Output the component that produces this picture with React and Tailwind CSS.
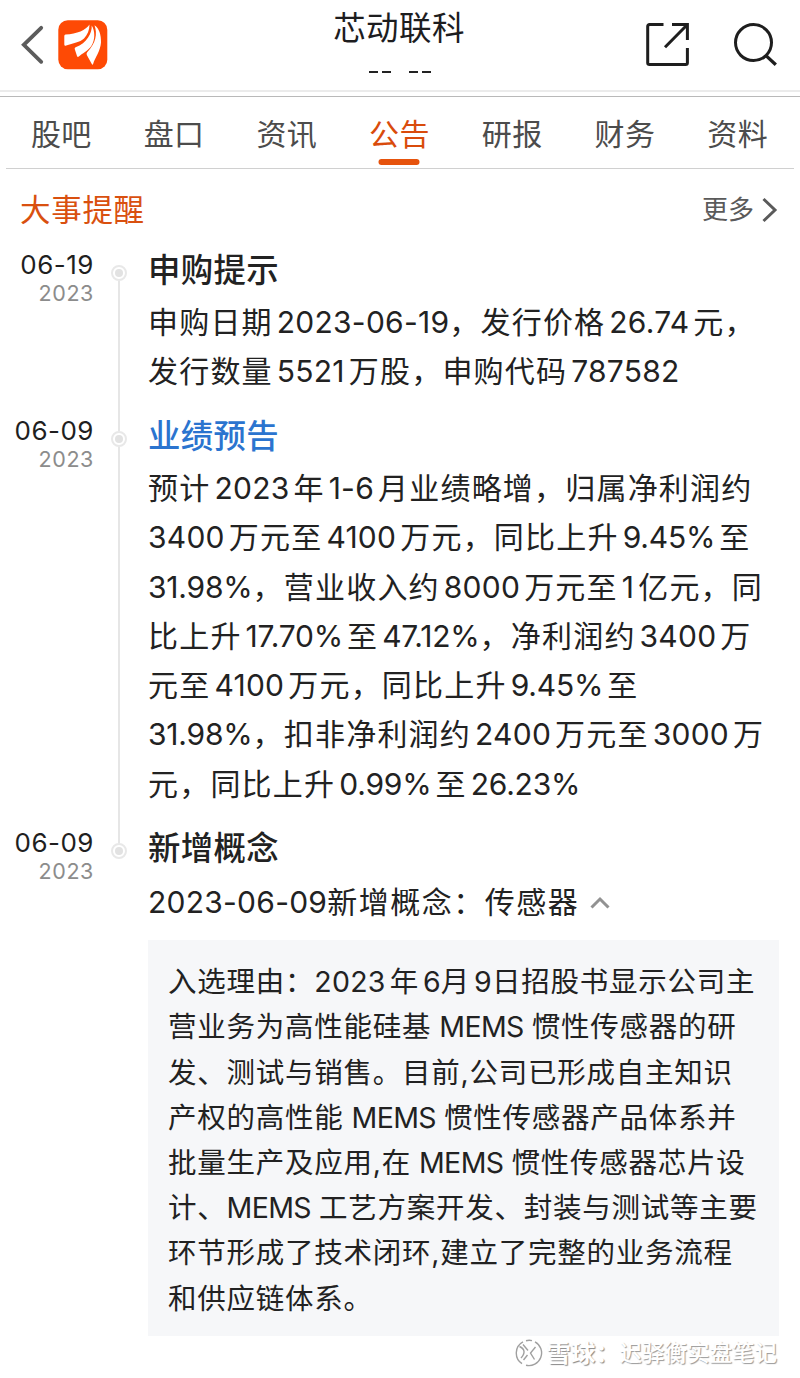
import clsx from 'clsx';

const tabs = ['股吧', '盘口', '资讯', '公告', '研报', '财务', '资料'];

const events = [
  {
    date: '06-19',
    year: '2023',
    title: '申购提示',
    height: 'h-[166px]',
    lines: ['申购日期 2023-06-19，发行价格 26.74 元，', '发行数量 5521 万股，申购代码 787582'],
  },
  {
    date: '06-09',
    year: '2023',
    title: '业绩预告',
    link: true,
    height: 'h-[412px]',
    lines: [
      '预计 2023 年 1-6 月业绩略增，归属净利润约',
      '3400 万元至 4100 万元，同比上升 9.45% 至',
      '31.98%，营业收入约 8000 万元至 1 亿元，同',
      '比上升 17.70% 至 47.12%，净利润约 3400 万',
      '元至 4100 万元，同比上升 9.45% 至',
      '31.98%，扣非净利润约 2400 万元至 3000 万',
      '元，同比上升 0.99% 至 26.23%',
    ],
  },
  {
    date: '06-09',
    year: '2023',
    title: '新增概念',
    height: 'h-[511px]',
    lines: ['2023-06-09新增概念：传感器'],
    reason: [
      '入选理由：2023 年 6月 9日招股书显示公司主',
      '营业务为高性能硅基  MEMS  惯性传感器的研',
      '发、测试与销售。目前,公司已形成自主知识',
      '产权的高性能  MEMS  惯性传感器产品体系并',
      '批量生产及应用,在  MEMS  惯性传感器芯片设',
      '计、MEMS  工艺方案开发、封装与测试等主要',
      '环节形成了技术闭环,建立了完整的业务流程',
      '和供应链体系。',
    ],
  },
];

// A single space is the thin gap next to a number, a double one is a real word space
const Line = ({ text }) => (
  <>
    {text.split(/( +|[\w.%-]+)/).map((part, i) => {
      if (part === ' ') return <span key={i} className="inline-block w-[4px]" />;
      if (part === '  ') return <span key={i} className="inline-block w-[8px]" />;
      if (/^[A-Z]/.test(part)) return <span key={i} className="tracking-[-0.6px]">{part}</span>;
      if (part.endsWith('%')) return <span key={i} className="tracking-[-0.2px]">{part}</span>;
      if (/^\d/.test(part)) return <span key={i} className="tracking-[0.25px]">{part}</span>;
      return <span key={i}>{part}</span>;
    })}
  </>
);

const Logo = () => (
  <svg className="h-[50px] w-[50px]" viewBox="0 0 50 50">
    <rect x="0.3" y="0.2" width="49" height="49" rx="9.5" fill="#fe4a05" />
    <path d="M31.5 4.5C28 10 19 14 7.5 14.5Q6.3 14.7 6.3 16V24.5Q6.4 26.4 8.2 25.6C15 23 22 22.5 26 18.5C29.5 15 31.5 10 31.5 4.5Z" fill="#fff" />
    <path d="M33.7 5.5C34.2 13 29 23 17.6 27.3Q16.4 27.8 16.7 29L19 36Q19.6 37.6 20.8 36.6C24 33.5 30 31 33.3 26C37.5 19.5 37 10.5 33.7 5.5Z" fill="#fff" />
    <path d="M36.5 5.3C39.5 14 38 23 29.2 32.2Q28.2 33.5 28.8 35L33.8 44Q34.6 45.4 35.2 43.8C36.8 38 42.5 31 43 22.5C43.3 15 41 8 36.5 5.3Z" fill="#fff" />
  </svg>
);

const Header = () => (
  <header className="flex h-[92px] items-start justify-between border-b-2 border-[#ebebeb] pl-[20px] pr-[22px]">
    <div className="flex w-[132px] items-center pt-[20px]">
      <svg className="mr-[14px] h-[40px] w-[24px]" viewBox="0 0 24 40" fill="none" stroke="#5c5c5c" strokeWidth="3.8">
        <path d="M21.2 2.8L3.8 19.8L21.2 36.8" strokeLinecap="round" />
      </svg>
      <Logo />
    </div>
    <div className="flex flex-col items-center pt-[6px] text-[#1d1d1f]">
      <h1 className="text-[32.5px] leading-[46px] tracking-[0.4px]">芯动联科</h1>
      <div className="ml-[2px] flex h-[40px] items-center gap-[18px]">
        <span className="flex gap-[4px]"><i className="h-[2px] w-[9px] bg-[#222]" /><i className="h-[2px] w-[9px] bg-[#222]" /></span>
        <span className="flex gap-[4px]"><i className="h-[2px] w-[9px] bg-[#222]" /><i className="h-[2px] w-[9px] bg-[#222]" /></span>
      </div>
    </div>
    <div className="flex w-[132px] justify-between pt-[22px]">
      <svg className="h-[46px] w-[46px]" viewBox="0 0 46 46" fill="none" stroke="#1e1e1e" strokeWidth="3">
        <path d="M17.5 2.6H3.6Q1.7 2.6 1.7 4.5V40.8Q1.7 42.6 3.6 42.6H39.6Q41.4 42.6 41.4 40.8V26" />
        <path d="M26 2.6H41.4V18M41.2 2.8L19 25.2" />
      </svg>
      <svg className="h-[46px] w-[46px]" viewBox="0 0 46 46" fill="none" stroke="#1e1e1e" strokeWidth="3">
        <circle cx="21.5" cy="20.6" r="18" />
        <path d="M34 33.6L43.8 42.8" strokeWidth="3.3" />
      </svg>
    </div>
  </header>
);

const TabBar = () => (
  <nav className="mt-[4px] border-t border-[#b9b9b9]">
    <div className="mx-[6px] h-[72px] border-b border-[#d0d0d0]">
      <div className="-ml-[1px] grid grid-cols-7">
        {tabs.map((tab) => (
          <button
            key={tab}
            className={clsx(
              'relative h-[71px] text-[30px] leading-[74px] tracking-[0.4px]',
              tab === '公告' ? 'text-[#d94b0b]' : 'text-[#4c4c4c]'
            )}
          >
            {tab}
            {tab === '公告' && (
              <span className="absolute bottom-[3px] left-1/2 h-[6px] w-[41px] -translate-x-1/2 rounded-full bg-[#e6530d]" />
            )}
          </button>
        ))}
      </div>
    </div>
  </nav>
);

const Event = ({ item, last }) => (
  <li className={clsx('flex', item.height)}>
    <div className="w-[94px] pt-[4px] text-right">
      <div className="text-[26px] leading-[30px] tracking-[0.5px] text-[#1f1f1f]">{item.date}</div>
      <div className="text-[21.5px] leading-[27px] tracking-[0.6px] text-[#8c8c8c]">{item.year}</div>
    </div>
    <div className="ml-[16px] flex w-[18px] flex-col items-center pt-[19px]">
      <div className="flex h-[16px] w-[16px] shrink-0 items-center justify-center rounded-full border-2 border-[#e8e8e8]">
        <div className="h-[8px] w-[8px] rounded-full bg-[#e2e2e2]" />
      </div>
      {!last && <div className="-mb-[19px] w-[2px] grow bg-[#e6e6e6]" />}
    </div>
    <div className="ml-[20px] w-[631px] whitespace-nowrap">
      <h3 className={clsx('mb-[3px] text-[32.4px] font-medium leading-[49px] tracking-[0.4px]', item.link ? 'text-[#2b74cf]' : 'text-[#222]')}>
        {item.title}
      </h3>
      <div className={clsx('text-[30px] leading-[49.25px] text-[#222]', item.reason ? 'pt-[2px] tracking-[1.5px]' : 'tracking-[1.2px]')}>
        {item.lines.map((line) => (
          <div key={line} className="flex items-center">
            <p><Line text={line} /></p>
            {item.reason && (
              <svg className="ml-[11px] h-[14px] w-[20px]" viewBox="0 0 20 14" fill="none" stroke="#929292" strokeWidth="3">
                <path d="M1.5 11.5L10 3L18.5 11.5" />
              </svg>
            )}
          </div>
        ))}
      </div>
      {item.reason && (
        <div className="mt-[13px] h-[396px] bg-[#f6f7f9] pl-[20px] pt-[19px] text-[28.5px] leading-[45.2px] tracking-[0.75px] text-[#222]">
          {item.reason.map((line) => (
            <p key={line}><Line text={line} /></p>
          ))}
        </div>
      )}
    </div>
  </li>
);

const Watermark = () => (
  <footer className="flex h-[36px] items-center justify-end pr-[23px] text-white">
    <svg className="mr-[4px] h-[28px] w-[28px]" viewBox="0 0 28 28" fill="none" stroke="#a0a0a0" strokeWidth="1.4">
      <path d="M8 2.8A12.7 12.7 0 0 0 7 24.6M11 26.3A12.7 12.7 0 0 0 20 2.8M17 1.6A12.7 12.7 0 0 0 11 1.7" />
      <path d="M4.5 7.5C10 10 10.5 14 6 19M8 5.5L13 11.5M20.5 8L15.5 14L19.5 20.5M12.5 16L8.5 21" />
    </svg>
    <span className="text-[24.3px] font-bold leading-[34px] [text-shadow:1px_1px_1px_#888]">雪球：</span>
    <span className="text-[22.5px] font-medium leading-[34px] [text-shadow:1px_1px_1px_#999]">迟驿衡实盘笔记</span>
  </footer>
);

const App = () => {
  return (
    <div className="h-[1378px] w-[800px] overflow-hidden bg-white font-['Inter','Noto_Sans_CJK_SC',sans-serif]">
      <Header />
      <TabBar />
      <div className="flex h-[77px] items-center justify-between pl-[20px] pr-[22px] pt-[4px]">
        <h2 className="text-[30.5px] tracking-[0.7px] text-[#d9500f]">大事提醒</h2>
        <a className="flex items-center text-[26px] text-[#5a5a5a]">
          更多
          <svg className="ml-[6px] h-[28px] w-[18px]" viewBox="0 0 18 28" fill="none" stroke="#5a5a5a" strokeWidth="3">
            <path d="M3.5 3L15 14L3.5 25" />
          </svg>
        </a>
      </div>
      <ul>
        {events.map((item, i) => (
          <Event key={item.title} item={item} last={i === events.length - 1} />
        ))}
      </ul>
      <Watermark />
    </div>
  );
};

export default App;
